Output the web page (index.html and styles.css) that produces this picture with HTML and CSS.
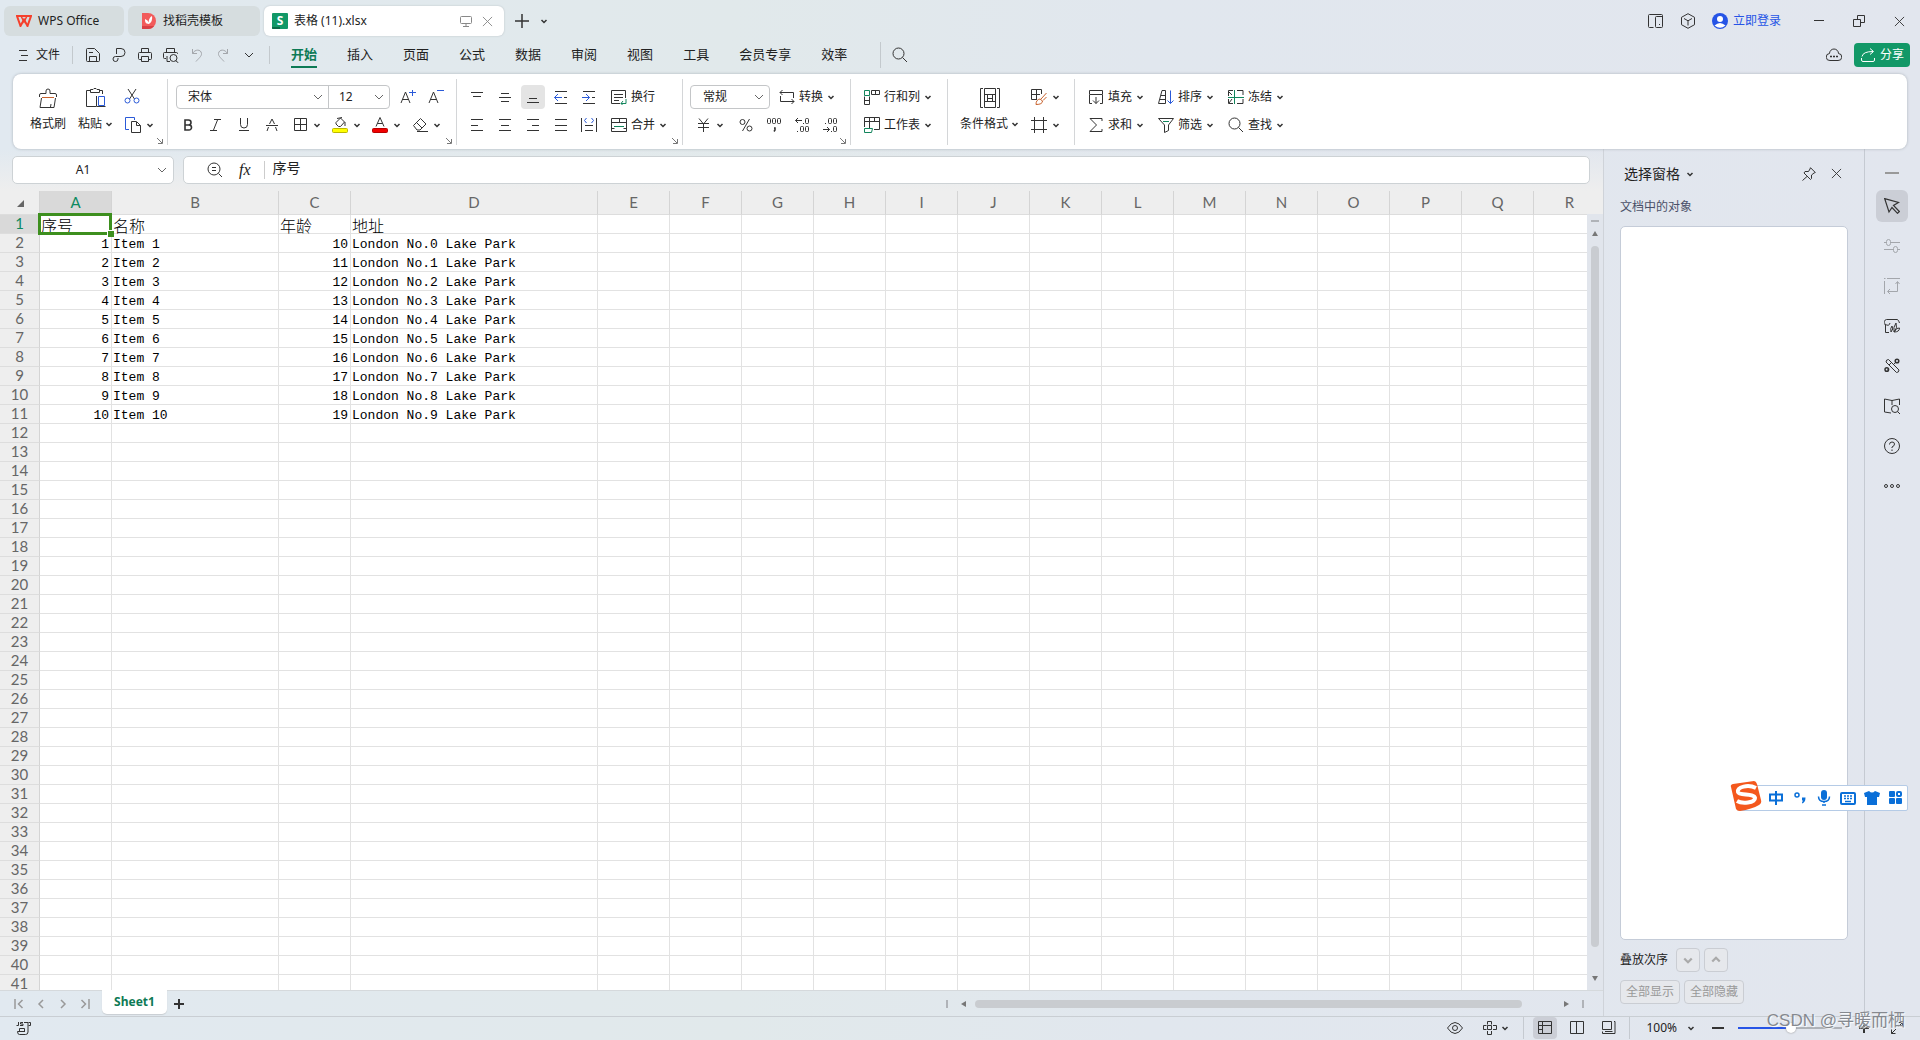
FILE: index.html
```html
<!DOCTYPE html>
<html lang="zh-CN">
<head>
  <meta charset="UTF-8" />
  <meta name="viewport" content="width=device-width, initial-scale=1.0"/>
  <title>表格 (11).xlsx - WPS Office</title>
  <link rel="stylesheet" href="styles.css">
</head>
<body>
  <!-- shared icons -->
  <svg class="sprite" aria-hidden="true">
    <symbol id="chev" viewBox="0 0 8 8"><path d="M1.500 3 4 5.500 6.500 3" stroke-width="1.5"/></symbol>
    <symbol id="corner" viewBox="0 0 8 8"><path d="M1 1l5 5M6.500 2v4.500H2"/></symbol>
    <symbol id="close" viewBox="0 0 12 12"><path d="M1 1l10 10M11 1 1 11"/></symbol>
    <symbol id="search" viewBox="0 0 16 16"><circle cx="6.500" cy="6.500" r="5.500"/><path d="M10.500 10.500 15 15"/></symbol>
  </svg>

  <header class="titlebar">
    <button class="doc-tab tab-home"><svg width="16" height="12" viewBox="0 0 16 12"><path d="M1 1h14l-3.500 10L8 4.500 4.500 11z" fill="none" stroke="#f5402c" stroke-width="2"/><path d="M5 1l3 6 3-6" fill="none" stroke="#f5402c" stroke-width="1.500"/></svg>WPS Office</button>
    <button class="doc-tab tab-docer"><svg width="14" height="16" viewBox="0 0 14 16"><path d="M0 0h6a8 8 0 0 1 0 16H0z" fill="#f25b5b"/><path d="M0 13h12q-2 3-6 3H0z" fill="#d93f44"/><path d="M7 11C3 11 3 8 3 6q3 1 4 4zM7 11C6 7 8 4 10 3q1 5-3 8z" fill="#fff"/></svg>找稻壳模板</button>
    <button class="doc-tab tab-active"><svg width="16" height="16" viewBox="0 0 16 16"><rect width="16" height="16" rx="1" fill="#129867"/><path d="M0 14h8v2H1q-1 0-1-1z" fill="#0b6b48"/><text x="8" y="12" class="s-letter">S</text></svg><span class="doc-name">表格 (11).xlsx</span><svg class="ico grey" width="12" height="12" viewBox="0 0 12 12"><rect x=".5" y="1.500" width="11" height="7" rx="1"/><path d="M3 11.500h6M6 9v2"/></svg><svg class="ico grey" width="11" height="11"><use href="#close"/></svg></button>
    <button class="new-tab" aria-label="新建"><svg class="ico" width="14" height="14" viewBox="0 0 14 14"><path d="M7 0v14M0 7h14" stroke-width="1.500"/></svg></button>
    <button aria-label="标签列表"><svg class="ico" width="8" height="8"><use href="#chev"/></svg></button>
    <div class="window-tools">
      <button aria-label="侧栏"><svg class="ico" width="16" height="16" viewBox="0 0 16 16"><path d="M5.500 14.500h-4q-1 0-1-1v-11q0-1 1-1h12q1 0 1 1v11q0 1-1 1h-5q-1 0-1-1v-9q0-1 1-1h6M11 11.500h1"/></svg></button>
      <button aria-label="应用"><svg class="ico" width="16" height="16" viewBox="0 0 16 16"><path d="M8 .7l6.500 3.600v7.400L8 15.300l-6.500-3.600V4.300zM4 5.500l4 2.300 4-2.300M8 8v4.500"/></svg></button>
      <button class="login"><svg width="16" height="16" viewBox="0 0 16 16"><circle cx="8" cy="8" r="8" fill="#2654e6"/><circle cx="8" cy="6" r="3" fill="#fff"/><path d="M2.500 12.500q5.500-5 11 0Q8 17 2.500 12.500z" fill="#fff"/></svg>立即登录</button>
      <button class="win" aria-label="最小化"><svg class="ico" width="12" height="12" viewBox="0 0 12 12"><path d="M1 5.500h10"/></svg></button>
      <button class="win" aria-label="还原"><svg class="ico" width="12" height="12" viewBox="0 0 12 12"><path d="M.5 4.500h7v7h-7zM4.500 4V.5h7v7H8"/></svg></button>
      <button class="win" aria-label="关闭"><svg class="ico" width="11" height="11"><use href="#close"/></svg></button>
    </div>
  </header>

  <nav class="menubar">
    <button class="file-menu"><svg class="ico" width="10" height="12" viewBox="0 0 10 12"><path d="M0 1.500h8M2 6.500h7M0 11.500h8"/></svg>文件</button>
    <div class="quick">
      <button aria-label="保存"><svg class="ico" width="16" height="16" viewBox="0 0 16 16"><path d="M2.500 1.500h7l5 5v7q0 1-1 1h-11q-1 0-1-1v-11q0-1 1-1zM4.500 14V9.500h7V14M4 5.500h4"/></svg></button>
      <button aria-label="输出"><svg class="ico" width="16" height="16" viewBox="0 0 16 16"><path d="M5.500 7V1.500H10a4 4 0 0 1 0 8H4.500a2.500 2.500 0 1 0 2.500 2.500v-1"/></svg></button>
      <button aria-label="打印"><svg class="ico" width="16" height="16" viewBox="0 0 16 16"><path d="M4.500 5V1.500h7V5M4 12.500H2.500q-1 0-1-1v-5q0-1 1-1h11q1 0 1 1v5q0 1-1 1H12M4.500 9.500h7v5h-7z"/></svg></button>
      <button aria-label="打印预览"><svg class="ico" width="16" height="16" viewBox="0 0 16 16"><path d="M3.500 5V1.500h8V5M3 11.500H1.500q-1 0-1-1v-4q0-1 1-1h12q1 0 1 1V7M4 9v5.500h3M12.500 13.500l3 2.500"/><circle cx="10.500" cy="11" r="3.500"/></svg></button>
      <button class="off" aria-label="撤销"><svg class="ico" width="16" height="16" viewBox="0 0 16 16"><path d="M3.500 2v4.500H8M3.500 6.500C6 2 12 2 12.500 6.500 13 9 9 12 7 14.500"/></svg></button>
      <button class="off" aria-label="恢复"><svg class="ico" width="16" height="16" viewBox="0 0 16 16"><path d="M12.500 2v4.500H8M12.500 6.500C10 2 4 2 3.500 6.500 3 9 7 12 9 14.500"/></svg></button>
      <button aria-label="更多"><svg class="ico" width="10" height="6" viewBox="0 0 10 6"><path d="M1 1l4 4 4-4"/></svg></button>
    </div>
    <div class="menus">
      <button class="current">开始</button>
      <button>插入</button>
      <button>页面</button>
      <button>公式</button>
      <button>数据</button>
      <button>审阅</button>
      <button>视图</button>
      <button>工具</button>
      <button>会员专享</button>
      <button>效率</button>
    </div>
    <button class="find" aria-label="搜索"><svg class="ico" width="16" height="16"><use href="#search"/></svg></button>
    <button class="cloud" aria-label="云"><svg class="ico" width="16" height="14" viewBox="0 0 16 14"><path d="M4 12.500a3.500 3.500 0 0 1-.5-7 4.500 4.500 0 0 1 9 0 3.500 3.500 0 0 1-.5 7z"/><path d="M4 8.500h2M7 8.500h2M10 8.500h2" stroke-width="1.500"/></svg></button>
    <button class="share"><svg class="ico" width="16" height="16" viewBox="0 0 16 16"><path d="M1.500 11v2q0 1.500 1.500 1.500h10q1.500 0 1.500-1.500v-2M2 9.500q1-5 11-5M10 1.500l3.500 3-3.500 3"/></svg>分享</button>
  </nav>

  <section class="ribbon">
    <div class="group g-clip">
      <button class="big"><svg class="ico" width="20" height="20" viewBox="0 0 20 20"><path d="M1.500 9V7q0-1.500 1.500-1.500h5V3a2 2 0 1 1 4 0v2.500h5q1.500 0 1.500 1.500v2M3.500 10 2 19.500h14l1.500-9.500M12.500 19l.5-3"/><path d="M4 9.500h12" stroke="#c8622d"/></svg><span>格式刷</span></button>
      <button class="big"><svg class="ico" width="20" height="20" viewBox="0 0 20 20"><path d="M10 18.500H.5v-16H4M14 2.500h2.500V6M4.500 4.500v-3H7l1-1h2l1 1h2.500v3z"/><path d="M12.500 8.500h6v9h-6z" stroke="#2a5ad8"/><path d="M10.500 8v10.500h9"/></svg><span>粘贴<svg class="ico" width="8" height="8"><use href="#chev"/></svg></span></button>
      <div class="rows">
        <div class="row"><button class="ib" aria-label="剪切"><svg class="ico" width="16" height="16" viewBox="0 0 16 16"><path d="M4 0l6.500 10M12 0 5.500 10"/><g stroke="#2a5ad8"><circle cx="3.500" cy="11.500" r="2.500"/><circle cx="12.500" cy="11.500" r="2.500"/></g></svg></button></div>
        <div class="row"><button class="drop" aria-label="复制"><svg class="ico" width="16" height="16" viewBox="0 0 16 16"><path d="M4 12.500H.5V.5h9V3" stroke="#2a5ad8"/><path d="M6.500 4.500h5l4 4v7h-9zM11.500 5v3.500h4"/></svg><svg class="ico" width="8" height="8"><use href="#chev"/></svg></button></div>
      </div>
      <svg class="ico launch" width="8" height="8"><use href="#corner"/></svg>
    </div>

    <div class="group g-font">
      <div class="rows">
        <div class="row">
          <div class="selects">
            <select class="sel font-name" aria-label="字体"><option>宋体</option></select>
            <select class="sel font-size" aria-label="字号"><option>12</option></select>
          </div>
          <button class="ib" aria-label="增大字号"><svg class="ico" width="16" height="16" viewBox="0 0 16 16"><path d="M1 14 5.500 3 10 14M2.500 10.500h6"/><path d="M12.500 1v6M9 3.500h7" stroke="#2a5ad8"/></svg></button>
          <button class="ib" aria-label="减小字号"><svg class="ico" width="16" height="16" viewBox="0 0 16 16"><path d="M1 14 5.500 3 10 14M2.500 10.500h6"/><path d="M9 1.500h7" stroke="#2a5ad8"/></svg></button>
        </div>
        <div class="row">
          <button class="ib" aria-label="加粗"><svg class="ico" width="16" height="16" viewBox="0 0 16 16"><path d="M5 3h3.500a2.500 2.500 0 0 1 0 5H5zM5 8h4a2.500 2.500 0 0 1 0 5H5z" stroke-width="1.600"/></svg></button>
          <button class="ib" aria-label="倾斜"><svg class="ico" width="16" height="16" viewBox="0 0 16 16"><path d="M6 2.500h7M2 13.500h7M9.500 3l-4 10"/></svg></button>
          <button class="ib" aria-label="下划线"><svg class="ico" width="16" height="16" viewBox="0 0 16 16"><path d="M4.500 1v6.500a3.500 3.500 0 0 0 7 0V1M3 13.500h10"/></svg></button>
          <button class="ib" aria-label="删除线"><svg class="ico" width="16" height="16" viewBox="0 0 16 16"><path d="M2 8.500h12M5.500 7 8 2l2.500 5M4.500 10 3 14M11.500 10l1.500 4"/></svg></button>
          <button class="drop" aria-label="边框"><svg class="ico" width="16" height="16" viewBox="0 0 16 16"><path d="M2.500 1.500h12v12h-12zM8.500 1v12M2 7.500h12"/></svg><svg class="ico" width="8" height="8"><use href="#chev"/></svg></button>
          <button class="drop" aria-label="填充颜色"><svg class="ico" width="16" height="16" viewBox="0 0 16 16"><path d="M5 1.500l5-1M4 5.500 8.500 1l4 4-4 4.500h-2L4 7zM13 5v4"/><rect x=".5" y="11.500" width="15" height="4" rx="1" fill="#ff0" stroke="#bdb800"/></svg><svg class="ico" width="8" height="8"><use href="#chev"/></svg></button>
          <button class="drop" aria-label="字体颜色"><svg class="ico" width="16" height="16" viewBox="0 0 16 16"><path d="M4 9.500 8 .5l4 9M5.500 6.500h5"/><rect x=".5" y="11.500" width="15" height="4" rx="1" fill="#f00000" stroke="#b80000"/></svg><svg class="ico" width="8" height="8"><use href="#chev"/></svg></button>
          <button class="drop" aria-label="清除"><svg class="ico" width="16" height="16" viewBox="0 0 16 16"><path d="M1.500 8.500 8.500 1.500l5.500 5.500-6 6H5zM4.500 5.500l5.500 5.500M5 14.500h11"/></svg><svg class="ico" width="8" height="8"><use href="#chev"/></svg></button>
        </div>
      </div>
      <svg class="ico launch" width="8" height="8"><use href="#corner"/></svg>
    </div>

    <div class="group g-align">
      <div class="rows">
        <div class="row">
          <button class="ib" aria-label="顶端对齐"><svg class="ico" width="16" height="16" viewBox="0 0 16 16"><path d="M2 3.500h12M4 7.500h8"/></svg></button>
          <button class="ib" aria-label="垂直居中"><svg class="ico" width="16" height="16" viewBox="0 0 16 16"><path d="M4 4.500h8M2 8.500h12M4 12.500h8"/></svg></button>
          <button class="ib on" aria-label="底端对齐"><svg class="ico" width="16" height="16" viewBox="0 0 16 16"><path d="M4 9.500h8M2 13.500h12"/></svg></button>
          <button class="ib" aria-label="减少缩进"><svg class="ico" width="16" height="16" viewBox="0 0 16 16"><path d="M2 2.500h12M11 8.500h3M2 14.500h12"/><path d="M9 8.500H1.500M5 5 1.500 8.500 5 12" stroke="#2a5ad8"/></svg></button>
          <button class="ib" aria-label="增加缩进"><svg class="ico" width="16" height="16" viewBox="0 0 16 16"><path d="M2 2.500h12M11 8.500h3M2 14.500h12"/><path d="M1 8.500h7.500M5 5l3.500 3.500L5 12" stroke="#2a5ad8"/></svg></button>
          <button class="tb first"><svg class="ico" width="16" height="16" viewBox="0 0 16 16"><path d="M9 14.500H.5V1.500h14V9M3 5.500h9M3 8.500h9M3 11.500h5"/><path d="M15 10v4.500h-5M12 12l-2 2.500 2 2" stroke="#12855c"/></svg>换行</button>
        </div>
        <div class="row">
          <button class="ib" aria-label="左对齐"><svg class="ico" width="16" height="16" viewBox="0 0 16 16"><path d="M2 2.500h12M2 8.500h7M2 13.500h12"/></svg></button>
          <button class="ib" aria-label="水平居中"><svg class="ico" width="16" height="16" viewBox="0 0 16 16"><path d="M2 2.500h12M4 8.500h8M2 13.500h12"/></svg></button>
          <button class="ib" aria-label="右对齐"><svg class="ico" width="16" height="16" viewBox="0 0 16 16"><path d="M2 2.500h12M7 8.500h7M2 13.500h12"/></svg></button>
          <button class="ib" aria-label="两端对齐"><svg class="ico" width="16" height="16" viewBox="0 0 16 16"><path d="M2 2.500h12M2 8.500h12M2 13.500h12"/></svg></button>
          <button class="ib" aria-label="分散对齐"><svg class="ico" width="16" height="16" viewBox="0 0 16 16"><path d="M.5 1v14M15.500 1v14M4 8.500h8M4 13.500h8"/><path d="M5.500 1 3.500 3.500 5.500 6M10.500 1l2 2.500-2 2.500" stroke="#2a5ad8"/></svg></button>
          <button class="tb first"><svg class="ico" width="16" height="16" viewBox="0 0 16 16"><path d="M.5 1.500h15v13H.5zM0 5.500h16M8.500 1v4M.5 11.500h3M12.500 11.500h3"/><path d="M3 9.500h10" stroke="#12855c"/></svg>合并<svg class="ico" width="8" height="8"><use href="#chev"/></svg></button>
        </div>
      </div>
      <svg class="ico launch" width="8" height="8"><use href="#corner"/></svg>
    </div>

    <div class="group g-num">
      <div class="rows">
        <div class="row">
          <div class="selects"><select class="sel fmt" aria-label="数字格式"><option>常规</option></select></div>
          <button class="tb conv"><svg class="ico" width="16" height="16" viewBox="0 0 16 16"><path d="M3.500 1 1 3.500 3.500 6M1 3.500h13.500V9M12.500 10l2.500 2.500-2.500 2.500M15 12.500H1.500V7"/></svg>转换<svg class="ico" width="8" height="8"><use href="#chev"/></svg></button>
        </div>
        <div class="row">
          <button class="drop money" aria-label="货币"><svg class="ico" width="16" height="16" viewBox="0 0 16 16"><path d="M4 1.500 8.500 7 13 1.500M3 6.500h11M3 10.500h11M8.500 7v8"/></svg><svg class="ico" width="8" height="8"><use href="#chev"/></svg></button>
          <button class="ib" aria-label="百分比"><svg class="ico" width="16" height="16" viewBox="0 0 16 16"><circle cx="4.500" cy="5" r="2.500"/><circle cx="11.500" cy="11.500" r="2.500"/><path d="M11.500 2 4.500 14"/></svg></button>
          <button class="ib" aria-label="千位分隔"><svg class="ico" width="16" height="16" viewBox="0 0 16 16"><rect x="1.500" y="1.500" width="3" height="5" rx="1"/><rect x="6.500" y="1.500" width="3" height="5" rx="1"/><rect x="11.500" y="1.500" width="3" height="5" rx="1"/><path d="M8 11h1v2l-1 1.500" stroke-width="1.500"/></svg></button>
          <button class="ib" aria-label="增加小数位"><svg class="ico" width="16" height="16" viewBox="0 0 16 16"><path d="M8 3.500H1.500M4 1 1.500 3.500 4 6M9 6.500h1M3 14.500h1"/><rect x="11.500" y="1.500" width="3" height="5" rx="1"/><rect x="6.500" y="9.500" width="3" height="5" rx="1"/><rect x="11.500" y="9.500" width="3" height="5" rx="1"/></svg></button>
          <button class="ib" aria-label="减少小数位"><svg class="ico" width="16" height="16" viewBox="0 0 16 16"><path d="M1 12.500h6.500M5 10l2.500 2.500L5 15M9 14.500h1M3 6.500h1"/><rect x="11.500" y="9.500" width="3" height="5" rx="1"/><rect x="6.500" y="1.500" width="3" height="5" rx="1"/><rect x="11.500" y="1.500" width="3" height="5" rx="1"/></svg></button>
        </div>
      </div>
      <svg class="ico launch" width="8" height="8"><use href="#corner"/></svg>
    </div>

    <div class="group g-cells">
      <div class="rows">
        <div class="row"><button class="tb"><svg class="ico" width="16" height="16" viewBox="0 0 16 16"><path d="M7.500 1.500h8v4h-8zM11.500 1.500v4M.5 7.500v8h5v-8M.5 11.500h5"/><path d="M.5 1.500h5v5h-5z" stroke="#12855c"/></svg>行和列<svg class="ico" width="8" height="8"><use href="#chev"/></svg></button></div>
        <div class="row"><button class="tb"><svg class="ico" width="16" height="16" viewBox="0 0 16 16"><path d="M.5 10V.5h15v12H10M0 4.500h16M5.500 1v10M10.500 1v3"/><path d="M.5 11.500h8l-1 4h-7z" stroke="#12855c"/></svg>工作表<svg class="ico" width="8" height="8"><use href="#chev"/></svg></button></div>
      </div>
    </div>

    <div class="group g-style">
      <button class="big"><svg class="ico" width="20" height="20" viewBox="0 0 20 20"><path d="M3 .5H.5v19H3M17 .5h2.500v19H17M4.500.5h11v19h-11zM4 6.500h12M4 13.500h12M7.500 7v6M12.500 7v6M7.500 10.500h5"/></svg><span>条件格式<svg class="ico" width="8" height="8"><use href="#chev"/></svg></span></button>
      <div class="rows">
        <div class="row"><button class="drop" aria-label="表格样式"><svg class="ico" width="16" height="16" viewBox="0 0 16 16"><path d="M6 10.500H.5V.5h10V5M0 5.500h9M5.500 1v9"/><path d="M15.500 4 10 10M15.500 8 12 11.500M5 15.500q0-5 4-5.500l2.500 2q0 3.500-6.500 3.500z" stroke="#c8622d"/></svg><svg class="ico" width="8" height="8"><use href="#chev"/></svg></button></div>
        <div class="row"><button class="drop" aria-label="单元格"><svg class="ico" width="16" height="16" viewBox="0 0 16 16"><path d="M3.500 0v16M12.500 0v16M0 3.500h16M0 12.500h16"/></svg><svg class="ico" width="8" height="8"><use href="#chev"/></svg></button></div>
      </div>
    </div>

    <div class="group g-edit">
      <div class="rows">
        <div class="row">
          <button class="tb"><svg class="ico" width="16" height="16" viewBox="0 0 16 16"><path d="M4 14.500H1.500V5.500h13v9H12M1.500 5V1.500h13V5M8 8v6.500M5 11.500l3 3 3-3"/></svg>填充<svg class="ico" width="8" height="8"><use href="#chev"/></svg></button>
          <button class="tb"><svg class="ico" width="16" height="16" viewBox="0 0 16 16"><path d="M.5 14.500 4 1.500h3.500v13zM3 6.500h4M2 10.500h5"/><path d="M12.500 1.500v13M9.500 11.500l3 3 3-3" stroke="#2a5ad8"/></svg>排序<svg class="ico" width="8" height="8"><use href="#chev"/></svg></button>
          <button class="tb"><svg class="ico" width="16" height="16" viewBox="0 0 16 16"><path d="M.5 7V1.500H5M9 1.500h6V6M.5 10v4.500H5M9 14.500h6V10M1 3l3 3M1 14l3-4"/><path d="M6.500 1v14M0 8.500h16" stroke="#12855c"/></svg>冻结<svg class="ico" width="8" height="8"><use href="#chev"/></svg></button>
        </div>
        <div class="row">
          <button class="tb"><svg class="ico" width="16" height="16" viewBox="0 0 16 16"><path d="M14 4V1.500H2L8.500 8 2 14.500h12V12"/></svg>求和<svg class="ico" width="8" height="8"><use href="#chev"/></svg></button>
          <button class="tb"><svg class="ico" width="16" height="16" viewBox="0 0 16 16"><path d="M.5 1.500h15L10.500 8v5.500l-4 2V8z"/><path d="M5 4.500h6" stroke="#12855c"/></svg>筛选<svg class="ico" width="8" height="8"><use href="#chev"/></svg></button>
          <button class="tb"><svg class="ico" width="16" height="16"><use href="#search"/></svg>查找<svg class="ico" width="8" height="8"><use href="#chev"/></svg></button>
        </div>
      </div>
    </div>
  </section>

  <main class="workspace">
    <div class="sheet-area">
      <div class="formula-row">
        <select class="sel name-box" aria-label="名称框"><option>A1</option></select>
        <div class="formula-bar">
          <svg class="ico" width="16" height="16" viewBox="0 0 16 16"><circle cx="7" cy="7" r="6"/><path d="M11.500 11.500 15 15M5 5.500h4M5 8.500h4"/></svg>
          <label class="fx" for="formula">fx</label>
          <input id="formula" type="text" value="序号">
        </div>
      </div>
      <div class="grid-box">
        <div class="grid-clip">
          <table class="grid" id="grid"></table>
        </div>
        <div class="vscroll">
          <i class="v-mark"></i><i class="tri up"></i><i class="v-thumb"></i><i class="tri down"></i>
        </div>
      </div>
      <div class="sheet-bar">
        <div class="sheet-nav">
          <button aria-label="第一张"><svg class="ico" width="10" height="12" viewBox="0 0 10 12"><path d="M1 1v10M8.500 2l-4 4 4 4" stroke-width="1.500"/></svg></button>
          <button aria-label="上一张"><svg class="ico" width="10" height="12" viewBox="0 0 10 12"><path d="M7 2 3 6l4 4" stroke-width="1.500"/></svg></button>
          <button aria-label="下一张"><svg class="ico" width="10" height="12" viewBox="0 0 10 12"><path d="M3 2l4 4-4 4" stroke-width="1.500"/></svg></button>
          <button aria-label="最后一张"><svg class="ico" width="10" height="12" viewBox="0 0 10 12"><path d="M9 1v10M1.500 2l4 4-4 4" stroke-width="1.500"/></svg></button>
        </div>
        <button class="sheet-tab">Sheet1</button>
        <button class="add-sheet" aria-label="新建工作表"><svg class="ico" width="10" height="10" viewBox="0 0 10 10"><path d="M5 0v10M0 5h10" stroke-width="2"/></svg></button>
        <div class="hscroll">
          <i class="h-mark"></i><i class="tri left"></i><i class="h-thumb"></i><i class="tri right"></i><i class="h-mark"></i>
        </div>
      </div>
    </div>

    <aside class="pane">
      <div class="pane-head">
        <button class="pane-title">选择窗格<svg class="ico" width="8" height="8"><use href="#chev"/></svg></button>
        <button aria-label="固定"><svg class="ico" width="14" height="14" viewBox="0 0 14 14"><path d="M8.500.7l4.800 4.800-1.300.5-2.500 2v3.500l-1 1L2 6l1-1.500h3.500l1.500-2.500zM5 9.500.5 13.500"/></svg></button>
        <button aria-label="关闭窗格"><svg class="ico" width="11" height="11"><use href="#close"/></svg></button>
      </div>
      <p class="pane-label">文档中的对象</p>
      <div class="object-list"></div>
      <div class="pane-row">
        <span>叠放次序</span>
        <button class="pb" aria-label="下移"><svg class="ico" width="12" height="12"><use href="#chev"/></svg></button>
        <button class="pb" aria-label="上移"><svg class="ico flip" width="12" height="12"><use href="#chev"/></svg></button>
      </div>
      <div class="pane-row">
        <button class="pb wide">全部显示</button>
        <button class="pb wide">全部隐藏</button>
      </div>
    </aside>

    <aside class="toolstrip">
      <button class="collapse" aria-label="收起"><svg class="ico" width="14" height="2" viewBox="0 0 14 2"><path d="M0 1h14" stroke-width="2"/></svg></button>
      <button class="on" aria-label="选择"><svg class="ico" width="16" height="16" viewBox="0 0 16 16"><path d="M.7.7 14.500 4.500 9.500 7.500 15.300 13.500 13.500 15.300 8 9.500 5 14z" stroke-width="1.200"/></svg></button>
      <button class="off" aria-label="属性"><svg class="ico" width="16" height="16" viewBox="0 0 16 16"><path d="M0 4.500h2.500M6.500 4.500H16M0 11.500h9.500M13.500 11.500H16"/><rect x="2.500" y="1.500" width="4" height="6" rx="2"/><rect x="9.500" y="8.500" width="4" height="6" rx="2"/></svg></button>
      <button class="off" aria-label="分析"><svg class="ico" width="16" height="16" viewBox="0 0 16 16"><path d="M3 .5h13M.5 3v13M0 .5h1.500M13.500 4v9.500H4M11.500 6l2-2.500 2 2.500M6 11l-2.500 2.500L6 16"/></svg></button>
      <button aria-label="稻壳"><svg class="ico" width="16" height="16" viewBox="0 0 16 16"><path d="M5 14.500H1.500V7A3 3 0 0 1 2.500 1.500h11Q15 3 15.500 5M1 6q4 3 5-1"/><path d="M7 14q-1-4 1-6 2 3-1 6zM10 14q-1-5 2-9 2 5-2 9zM10 14q3-5 5.500-4 0 4-5.500 4z"/></svg></button>
      <button aria-label="效率工具"><svg class="ico" width="16" height="16" viewBox="0 0 16 16"><path d="M2 4q0-2.500 2.500-2.500L15 12q0 2.500-2.500 2.500zM5 7l2.500-2.500M5 10 3.500 11.500M10 6l2-2"/><circle cx="13" cy="3" r="1.800" stroke-width="1.500"/><circle cx="2.800" cy="11.500" r="1.800" stroke-width="1.500"/></svg></button>
      <button aria-label="查阅"><svg class="ico" width="16" height="16" viewBox="0 0 16 16"><path d="M7 15 .5 14V1L8 2.500 15.500 1v6M8 2.500V7M13.500 13.500l2.500 2.500"/><circle cx="11" cy="11" r="3.500"/></svg></button>
      <button aria-label="帮助"><svg class="ico" width="16" height="16" viewBox="0 0 16 16"><circle cx="8" cy="8" r="7.500"/><path d="M5.500 6.500q0-2.500 2.500-2.500t2.500 2Q10.500 8 8 9v1M8 11.500v1.500"/></svg></button>
      <button aria-label="更多"><svg class="ico" width="16" height="6" viewBox="0 0 16 6"><circle cx="2" cy="3" r="1.500"/><circle cx="8" cy="3" r="1.500"/><circle cx="14" cy="3" r="1.500"/></svg></button>
    </aside>
  </main>

  <footer class="statusbar">
    <button class="macro" aria-label="JS宏"><svg class="ico" width="16" height="14" viewBox="0 0 16 14"><path d="M2.500 1v3.500H.5M7 1.500H4.500v1.500H7v1.500H4M8 1.500h4V11q0 2.500-2.500 2.500H3.500q-2 0-2-3H9M3.500 10V7.500h5V11M12.500 1.500h2v3h-2"/></svg></button>
    <button class="sb-eye" aria-label="护眼"><svg class="ico" width="16" height="12" viewBox="0 0 16 12"><path d="M.5 6Q4 .5 8 .5T15.500 6Q12 11.500 8 11.500T.5 6z"/><circle cx="8" cy="6" r="2.500"/></svg></button>
    <button class="sb-read" aria-label="阅读"><svg class="ico" width="14" height="14" viewBox="0 0 14 14"><path d="M4.500 3.500v-3h4v3M4.500 10v3.500h4V10M3.500 4.500h-3v4h3M10 4.500h3.500v4H10M4.500 4.500h4v4h-4z"/></svg><svg class="ico" width="8" height="8"><use href="#chev"/></svg></button>
    <div class="views">
      <button class="on" aria-label="普通视图"><svg class="ico" width="14" height="13" viewBox="0 0 14 13"><path d="M.5.500h13v12H.5zM0 4.500h14M0 8.500h5M4.500 0v13"/></svg></button>
      <button aria-label="页面布局"><svg class="ico" width="14" height="13" viewBox="0 0 14 13"><path d="M.5.500h13v12H.5zM6.500 0v13"/></svg></button>
      <button aria-label="分页预览"><svg class="ico" width="14" height="13" viewBox="0 0 14 13"><path d="M.5.500h9v8h-9zM12 .5h1v12H.5V10.500M3 10.500h7.500"/></svg></button>
    </div>
    <button class="zoom-val">100%<svg class="ico" width="8" height="8"><use href="#chev"/></svg></button>
    <button class="zoom-btn" aria-label="缩小"><svg class="ico" width="12" height="12" viewBox="0 0 12 12"><path d="M0 6h12" stroke-width="2"/></svg></button>
    <input class="zoom" type="range" min="0" max="100" value="51" aria-label="缩放">
    <button class="zoom-btn plus" aria-label="放大"><svg class="ico" width="12" height="12" viewBox="0 0 12 12"><path d="M6 1v10M1 6h10" stroke-width="2"/></svg></button>
    <button class="zoom-btn" aria-label="全屏"><svg class="ico" width="14" height="14" viewBox="0 0 14 14"><path d="M8.500 1.500h4v4M12.500 1.500 8 6M5.500 12.500h-4v-4M1.500 12.500 6 8"/></svg></button>
  </footer>

  <!-- floating input method bar -->
  <div class="ime">
    <svg class="ime-logo" width="32" height="32" viewBox="0 0 32 32"><path d="M3 4 24 1q2 0 3 3l4 16q1 3-2 5-7 4-19 6-3 0-4-2L1 7q-1-2 2-3z" fill="#f4581d"/><path d="M26 8C18 4 7 7 8 12c1 4 16 1 17 6 0 5-13 6-18 3" fill="none" stroke="#fff" stroke-width="4"/></svg>
    <svg width="16" height="16" viewBox="0 0 16 16"><path d="M2 4.500h12v6H2zM8 1v14" fill="none" stroke="#0a6fd8" stroke-width="2"/></svg>
    <svg width="16" height="16" viewBox="0 0 16 16"><circle cx="5" cy="5" r="2" fill="none" stroke="#0a6fd8" stroke-width="1.500"/><path d="M10 7.500h3.500q0 5-3.500 6v-1l1-2h-1z" fill="#0a6fd8"/></svg>
    <svg width="16" height="16" viewBox="0 0 16 16"><rect x="5" y="0" width="6" height="10" rx="3" fill="#0a6fd8"/><path d="M2.500 6.500q0 5 5.500 5t5.500-5M6 15h4M8 12v1" fill="none" stroke="#0a6fd8" stroke-width="1.500"/></svg>
    <svg width="16" height="16" viewBox="0 0 16 16"><rect x="1" y="3" width="14" height="11" rx="1" fill="none" stroke="#0a6fd8" stroke-width="2"/><path d="M4 6h2M7 6h2M10 6h2M4 8.500h2M7 8.500h2M10 8.500h2M5 11.500h6" stroke="#0a6fd8" stroke-width="1.500"/></svg>
    <svg width="16" height="16" viewBox="0 0 16 16"><path d="M5 1q3 3 6 0l5 2-1 4h-2v8H3V7H1L0 3z" fill="#0a6fd8"/></svg>
    <svg width="16" height="16" viewBox="0 0 16 16"><g fill="#0a6fd8"><rect x="1" y="1" width="6" height="6" rx="1"/><rect x="1" y="8" width="6" height="6" rx="1"/><rect x="8" y="8" width="6" height="6" rx="1"/></g><rect x="9" y="2" width="4" height="4" rx="1" fill="none" stroke="#0a6fd8" stroke-width="2"/></svg>
  </div>
  <div class="watermark">CSDN @寻暖而栖</div>

  <script src="script.js"></script>
</body>
</html>
```

FILE: styles.css
```css
* {
  box-sizing: border-box;
}
body {
  margin: 0;
  height: 100vh;
  display: flex;
  flex-direction: column;
  overflow: hidden;
  position: relative;
  background: linear-gradient(90deg, #e1e9f0 0%, #e1e9eb 38%, #e1e7ee 60%, #e2e6ee 100%);
  color: #222;
  font-family: "Noto Sans", "Noto Sans CJK SC", sans-serif;
  font-size: 12px;
  line-height: 16px;
}
button, input, select {
  font: inherit;
  color: inherit;
  border: none;
  background: none;
  margin: 0;
  padding: 0;
}
button {
  display: flex;
  align-items: center;
  justify-content: center;
  flex: none;
  white-space: nowrap;
}
svg {
  flex: none;
}
.sprite {
  position: absolute;
  width: 0;
  height: 0;
}
.ico {
  fill: none;
  stroke: #333;
  stroke-width: 1;
}
.grey {
  stroke: #888;
}
.off .ico {
  stroke: #a3a6ab;
}

/* title bar */
.titlebar {
  display: flex;
  align-items: center;
  height: 36px;
  padding: 6px 15px 0 4px;
  gap: 4px;
}
.doc-tab {
  height: 30px;
  justify-content: flex-start;
  gap: 6px;
  padding: 0 12px;
  border-radius: 6px;
  background: #d6dddf;
}
.tab-home {
  width: 120px;
}
.tab-docer {
  width: 132px;
  padding-left: 14px;
  gap: 7px;
}
.tab-active {
  width: 240px;
  padding: 0 11px 0 8px;
  background: #fff;
  box-shadow: 0 0 2px #b5bdc2;
  gap: 10px;
}
.doc-name {
  flex: 1;
  text-align: left;
  margin-left: -4px;
}
.s-letter {
  font: bold 12px "Noto Sans", sans-serif;
  fill: #fff;
  text-anchor: middle;
}
.new-tab {
  width: 28px;
}
.window-tools {
  margin-left: auto;
  display: flex;
  align-items: center;
  gap: 16px;
  height: 28px;
}
.login {
  gap: 5px;
  color: #2654e6;
}
.win {
  width: 12px;
  margin-left: 12px;
}
.login + .win {
  margin-left: 16px;
}

/* menu bar */
.menubar {
  display: flex;
  align-items: center;
  height: 24px;
  margin: 7px 10px 7px 19px;
}
.file-menu {
  gap: 7px;
  padding-right: 12px;
}
.quick {
  display: flex;
  align-items: center;
  border-left: 1px solid #c3c9cd;
  border-right: 1px solid #c3c9cd;
  height: 18px;
  padding: 0 7px;
}
.quick button {
  width: 26px;
}
.menus {
  display: flex;
  gap: 30px;
  margin-left: 21px;
  padding-right: 33px;
  border-right: 1px solid #c3c9cd;
  font-size: 13px;
}
.menus button {
  height: 26px;
  border-bottom: 2px solid transparent;
}
.menus .current {
  color: #0d7a55;
  font-weight: bold;
  border-bottom-color: #0d7a55;
}
.find {
  margin-left: 11px;
}
.cloud {
  margin-left: auto;
  margin-right: 12px;
}
.share {
  width: 56px;
  height: 24px;
  gap: 4px;
  border-radius: 4px;
  background: #129867;
  color: #fff;
}
.share .ico {
  stroke: #fff;
}

/* ribbon */
.ribbon {
  display: flex;
  height: 75px;
  margin: 0 13px;
  padding: 5px 0 4px;
  border-radius: 8px;
  background: #fff;
  box-shadow: 0 0 3px #a9b0b8;
  position: relative;
}
.group {
  display: flex;
  align-items: flex-start;
  padding-top: 4px;
  border-right: 1px solid #d4d6d8;
  position: relative;
}
.group:last-child {
  border-right: none;
}
.row {
  display: flex;
  align-items: center;
  height: 28px;
}
.launch {
  position: absolute;
  right: 3px;
  bottom: 0;
  stroke: #777;
}
.ib {
  width: 28px;
  height: 24px;
}
.ib.on {
  width: 24px;
  margin: 0 2px;
  border-radius: 4px;
  background: #e4e4e4;
}
.drop {
  width: 40px;
  height: 24px;
  gap: 5px;
}
.tb {
  height: 24px;
  gap: 4px;
}
.tb.first {
  padding-left: 8px;
}
.big {
  flex-direction: column;
  gap: 8px;
  padding-top: 5px;
  height: 56px;
  justify-content: flex-start;
}
.big span {
  display: flex;
  align-items: center;
  gap: 3px;
}
.g-clip {
  width: 155px;
  padding-left: 17px;
  gap: 12px;
}
.g-clip .rows {
  margin-left: -6px;
}
.g-clip .ib {
  margin-left: -1px;
}
.g-font {
  width: 289px;
  padding-left: 6px;
}
.g-align {
  width: 226px;
  padding-left: 6px;
}
.g-num {
  width: 168px;
  padding-left: 6px;
}
.g-cells {
  width: 97px;
  padding-left: 13px;
}
.g-style {
  width: 127px;
  padding-left: 12px;
  gap: 6px;
}
.g-edit {
  padding-left: 13px;
}
.g-edit .row {
  gap: 14px;
}
.selects {
  display: flex;
  height: 24px;
  border: 1px solid #c4c6c8;
  border-radius: 4px;
  margin: 0 4px 0 2px;
}
.sel {
  appearance: none;
  height: 100%;
  padding: 0 11px;
  background: url("data:image/svg+xml,%3Csvg xmlns='http://www.w3.org/2000/svg' width='10' height='6'%3E%3Cpath d='M1 1l4 4 4-4' fill='none' stroke='%23666'/%3E%3C/svg%3E") no-repeat right 5px center;
}
.font-name {
  width: 151px;
}
.font-size {
  width: 61px;
  padding: 0 10px;
  border-left: 1px solid #c4c6c8;
}
.g-num .selects {
  margin-left: 1px;
}
.fmt {
  width: 78px;
  padding-left: 12px;
}
.conv {
  margin-left: 5px;
}
.money {
  margin-right: 3px;
}

/* workspace */
.workspace {
  display: flex;
  flex: 1;
  min-height: 0;
}
.sheet-area {
  display: flex;
  flex-direction: column;
  flex: 1;
  min-width: 0;
}
.formula-row {
  display: flex;
  gap: 9px;
  padding: 7px 13px 7px 12px;
  height: 42px;
  background: linear-gradient(rgba(238, 238, 238, 0), #eee);
}
.name-box, .formula-bar {
  height: 28px;
  border: 1px solid #cdd2d5;
  border-radius: 5px;
  background-color: #fff;
}
.name-box {
  width: 162px;
  padding: 0 20px 0 0;
  text-align: center;
  text-align-last: center;
  background-position: right 6px center;
}
.formula-bar {
  flex: 1;
  display: flex;
  align-items: center;
  padding-left: 23px;
}
.fx {
  font: italic 16px "Liberation Serif", serif;
  padding: 0 13px 0 16px;
  border-right: 1px solid #ccc;
}
.formula-bar input {
  flex: 1;
  font-size: 14px;
  padding: 0 8px 4px;
}
.grid-box {
  flex: 1;
  display: flex;
  min-height: 0;
  background: #eee;
}
.grid-clip {
  flex: 1;
  min-width: 0;
  overflow: hidden;
}
.grid {
  table-layout: fixed;
  width: 1606px;
  border-collapse: separate;
  border-spacing: 0;
  background: #fff;
}
.grid th {
  height: 19px;
  padding: 0;
  background: #eee;
  border-right: 1px solid #d4d4d4;
  border-bottom: 1px solid #ddd;
  font: 15px/16px Lato, sans-serif;
  vertical-align: top;
  color: #666;
}
.grid thead th {
  height: 23px;
  line-height: 23px;
}
.grid .hot {
  background: #d9d9d9;
  color: #0d8a60;
}
.grid td {
  height: 19px;
  padding: 3px 2px 0 1px;
  border-right: 1px solid #e2e2e2;
  border-bottom: 1px solid #e2e2e2;
  font: 13px/15px "Liberation Mono", monospace;
  color: #000;
  white-space: nowrap;
}
.grid td.num {
  text-align: right;
}
.grid td.title {
  padding-top: 1px;
  font: 16px/16px "Noto Sans CJK SC", sans-serif;
  font-weight: 300;
}
.grid td.picked {
  position: relative;
}
.picked::before {
  content: "";
  position: absolute;
  inset: -2px -1px -2px -2px;
  border: 3px solid #3d8f1e;
}
.picked::after {
  content: "";
  position: absolute;
  right: -3px;
  bottom: -4px;
  width: 6px;
  height: 6px;
  background: #3d8f1e;
  border: 1px solid #fff;
  border-width: 1px 0 0 1px;
}
.select-all {
  width: 0;
  height: 0;
  margin: 9px 0 0 17px;
  border-left: 7px solid transparent;
  border-bottom: 7px solid #666;
}
.tri {
  width: 0;
  height: 0;
  border: 3px solid transparent;
}
.up {
  border-top: none;
  border-bottom: 5px solid #777;
}
.down {
  border-bottom: none;
  border-top: 5px solid #777;
}
.left {
  border-left: none;
  border-right: 5px solid #777;
}
.right {
  border-right: none;
  border-left: 5px solid #777;
}
.vscroll {
  width: 16px;
  margin-top: 23px;
  padding: 6px 0 9px;
  display: flex;
  flex-direction: column;
  align-items: center;
  background: #e1e5ec;
}
.v-mark {
  width: 8px;
  height: 2px;
  margin-bottom: 9px;
  background: #b0b3b8;
}
.v-thumb {
  flex: 1;
  width: 8px;
  margin: 10px 0 29px;
  border-radius: 4px;
  background: #c9ccd1;
}

/* sheet tabs */
.sheet-bar {
  display: flex;
  height: 26px;
  border-top: 1px solid #d5d9dc;
}
.sheet-nav {
  display: flex;
  align-items: center;
  gap: 12px;
  padding: 0 12px 0 14px;
}
.sheet-nav .ico {
  stroke: #999;
}
.sheet-tab {
  width: 65px;
  height: 24px;
  margin-top: -1px;
  border-radius: 0 0 5px 5px;
  background: #fff;
  box-shadow: 0 1px 1px #c9ced2;
  color: #0d7a55;
  font-weight: bold;
}
.add-sheet {
  width: 23px;
}
.hscroll {
  display: flex;
  align-items: center;
  width: 41%;
  margin-left: auto;
  padding: 0 19px 0 0;
}
.h-mark {
  width: 2px;
  height: 8px;
  background: #b0b3b8;
}
.left {
  margin: 0 9px 0 13px;
}
.h-thumb {
  flex: 1;
  height: 8px;
  margin-right: 42px;
  border-radius: 4px;
  background: #c9ccd0;
}
.right {
  margin-right: 13px;
}

/* selection pane */
.pane {
  display: flex;
  flex-direction: column;
  width: 261px;
  padding: 0 16px 12px 16px;
  border-left: 1px solid #cfd3d9;
}
.pane-head {
  display: flex;
  align-items: center;
  gap: 15px;
  height: 49px;
  padding-right: 6px;
}
.pane-title {
  margin: 0 auto 0 4px;
  gap: 6px;
  font-size: 14px;
}
.pane-label {
  margin: 1px 0 11px;
  color: #4a5068;
}
.object-list {
  flex: 1;
  border: 1px solid #c5ccd8;
  border-radius: 5px;
  background: #fff;
}
.pane-row {
  display: flex;
  align-items: center;
  gap: 4px;
  margin-top: 8px;
}
.pane-row span {
  margin-right: 4px;
}
.pb {
  width: 24px;
  height: 24px;
  border: 1px solid #cacdd3;
  border-radius: 4px;
  background: #e6e8ec;
  color: #999;
}
.pb .ico {
  stroke: #aaa;
}
.pb.wide {
  width: 60px;
}
.flip {
  transform: rotate(180deg);
}
.toolstrip {
  display: flex;
  flex-direction: column;
  align-items: center;
  gap: 8px;
  width: 56px;
  padding: 12px 2px 0 0;
  border-left: 1px solid #c5cad2;
}
.toolstrip button {
  width: 32px;
  height: 32px;
  border-radius: 6px;
}
.toolstrip .collapse {
  height: 24px;
  margin-bottom: -3px;
}
.collapse .ico {
  stroke: #999;
}
.toolstrip .on, .views .on {
  background: #cbced6;
}

/* status bar */
.statusbar {
  display: flex;
  align-items: center;
  height: 24px;
  padding: 0 16px 2px;
  border-top: 1px solid #c9ced3;
}
.sb-eye {
  margin-left: auto;
}
.sb-read {
  gap: 4px;
  margin: 0 14px 0 20px;
}
.views {
  display: flex;
  gap: 8px;
  padding: 0 8px 0 9px;
  border-left: 1px solid #c5cad0;
  border-right: 1px solid #c5cad0;
}
.views button {
  width: 24px;
  height: 22px;
  border-radius: 4px;
}
.zoom-val {
  gap: 10px;
  margin: 0 17px 0 16px;
}
.zoom {
  appearance: none;
  width: 104px;
  height: 12px;
  margin: 0 16px 0 14px;
}
.zoom::-webkit-slider-runnable-track {
  height: 2px;
  background: linear-gradient(90deg, #2654e6 50%, #aeb2b8 50%);
}
.zoom::-webkit-slider-thumb {
  appearance: none;
  width: 10px;
  height: 10px;
  margin-top: -4px;
  border-radius: 50%;
  background: #fff;
  box-shadow: 0 0 2px #888;
}
.plus {
  margin-right: 20px;
}

/* overlays */
.ime {
  position: absolute;
  right: 12px;
  top: 785px;
  display: flex;
  align-items: center;
  gap: 8px;
  height: 26px;
  padding-right: 3px;
  border: 1px solid #b5cbe6;
  border-radius: 2px;
  background: #fff;
}
.ime-logo {
  margin: -5px -2px -1px -8px;
}
.watermark {
  position: absolute;
  right: 15px;
  bottom: 7px;
  font-family: "Liberation Sans", "Noto Sans CJK SC", sans-serif;
  font-size: 17px;
  line-height: 24px;
  color: #85898f;
  text-shadow: 1px 1px 1px #fff;
}
```

FILE: script.js
```javascript
const widths = { A: 72, B: 167, C: 72, D: 247 };
const columns = "ABCDEFGHIJKLMNOPQR".split("");
const rowCount = 41;

const data = [["序号", "名称", "年龄", "地址"]];
for (let i = 1; i <= 10; i++) {
  data.push([i, `Item ${i}`, 9 + i, `London No.${i - 1} Lake Park`]);
}

let html = `<colgroup><col width="40">`;
html += columns.map(c => `<col width="${widths[c] || 72}">`).join("");
html += `</colgroup><thead><tr><th><div class="select-all"></div></th>`;
html += columns.map(c => `<th${c === "A" ? ' class="hot"' : ""}>${c}</th>`).join("");
html += `</tr></thead><tbody>`;

for (let r = 0; r < rowCount; r++) {
  html += `<tr><th${r === 0 ? ' class="hot"' : ""}>${r + 1}</th>`;
  for (let c = 0; c < columns.length; c++) {
    const value = data[r] && data[r][c] !== undefined ? data[r][c] : "";
    const names = [];
    if (typeof value === "number") names.push("num");
    if (r === 0 && value) names.push("title");
    if (r === 0 && c === 0) names.push("picked");
    html += `<td${names.length ? ` class="${names.join(" ")}"` : ""}>${value}</td>`;
  }
  html += `</tr>`;
}

document.getElementById("grid").innerHTML = html + `</tbody>`;
```
